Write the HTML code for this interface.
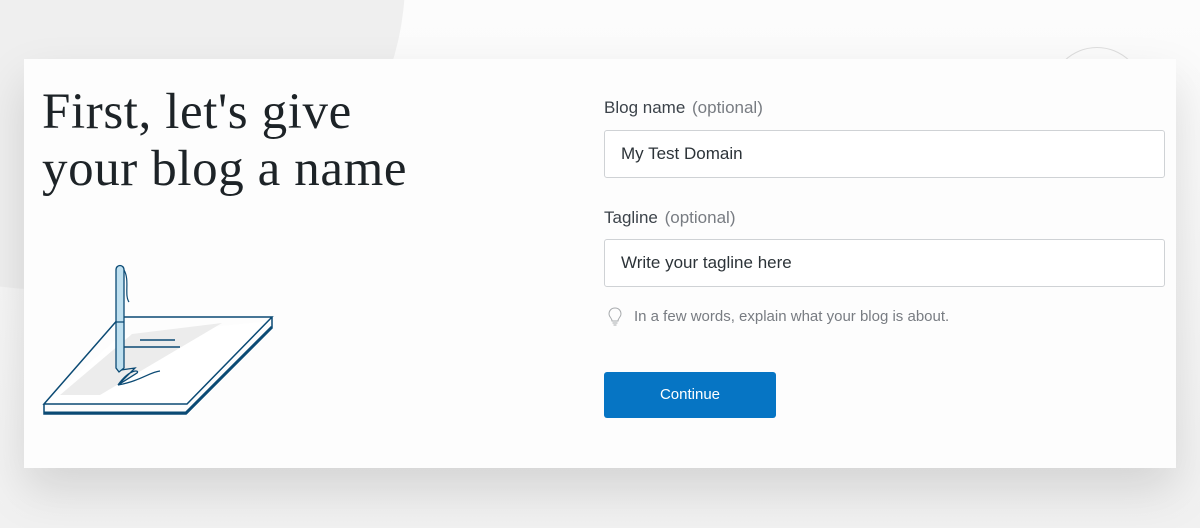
<!DOCTYPE html>
<html><head><style>
body{margin:0;width:1200px;height:528px;overflow:hidden;background:linear-gradient(#fcfcfc 0,#f6f6f6 60%,#f1f1f1 100%);position:relative;font-family:"Liberation Sans",sans-serif}
.blob{position:absolute;left:-300px;top:-330px;width:705px;height:620px;border-radius:50%;background:#efefef}
.ring{position:absolute;left:1050px;top:47px;width:92px;height:92px;border-radius:50%;border:1px solid #ddd}
.card{position:absolute;left:24px;top:59px;width:1152px;height:409px;background:#fdfdfd;box-shadow:0 22px 45px rgba(0,0,0,0.13)}
h1{position:absolute;left:18px;top:25px;margin:0;font-family:"Liberation Serif",serif;font-weight:400;font-size:51px;line-height:57px;color:#1d2327;letter-spacing:0.6px}
.lab{position:absolute;left:580px;font-size:17px;color:#3c434a}
.lab span{color:#787c82;margin-left:2px}
.inp{position:absolute;left:580px;height:48px;border:1px solid #cfd2d5;border-radius:3px;background:#fff;font-size:17px;color:#2c3338;line-height:46px;padding-left:16px;box-sizing:border-box;width:561px}
.hint{position:absolute;top:249px;font-size:15px;color:#787c82}
.btn{position:absolute;left:580px;top:313px;width:172px;height:46px;background:#0675c4;border-radius:3px;color:#fff;font-size:15px;text-align:center;line-height:46px}
</style></head><body>
<div class="blob"></div>
<div class="ring"></div>
<div class="card">
<h1>First, let's give<br>your blog a name</h1>
<svg style="position:absolute;left:14px;top:205px" width="240" height="160" viewBox="38 264 240 160">
<path d="M45 403 L120 336 L272 321 L188 404 Z" fill="#fff"/>
<path d="M60 395 L132 334 L222 323 L100 395 Z" fill="#ececec"/>
<path d="M44 404 L120 317 L272 317 L187 404 Z M44 404 L44 414 L186 414 L272 327 L272 317" fill="none" stroke="#0b4a74" stroke-width="1.5"/>
<path d="M44 413 L186 413 L272 327" fill="none" stroke="#0b4a74" stroke-width="3"/>
<path d="M140 340 H175 M123 347 H180" stroke="#0b4a74" stroke-width="1.5"/>
<path d="M121 370 L135 368 L118 385 C130 368 140 370 137 373 L118 385 C140 381 150 372 160 371" fill="none" stroke="#0b4a74" stroke-width="1.3"/>
<path d="M116 270 C116 264 124 264 124 270 L124 368 L119 372 L116 368 Z" fill="#bfe0f0" stroke="#0b4a74" stroke-width="1.3"/>
<path d="M124 270 C130 280 124 295 129 302 M116 322 H124" fill="none" stroke="#0b4a74" stroke-width="1.2"/>
</svg>
<div class="lab" style="top:39px">Blog name <span>(optional)</span></div>
<div class="inp" style="top:71px">My Test Domain</div>
<div class="lab" style="top:149px">Tagline <span>(optional)</span></div>
<div class="inp" style="top:180px">Write your tagline here</div>
<svg style="position:absolute;left:584px;top:248px" width="14" height="20" viewBox="0 0 14 20"><path d="M7 1 C3 1 1 4 1 7 C1 10 4 11 4 14 H10 C10 11 13 10 13 7 C13 4 11 1 7 1 Z M4.5 16 H9.5 M5.5 18 H8.5" fill="none" stroke="#a7aaad" stroke-width="1"/></svg>
<div class="hint" style="left:610px">In a few words, explain what your blog is about.</div>
<div class="btn">Continue</div>
</div>
</body></html>
